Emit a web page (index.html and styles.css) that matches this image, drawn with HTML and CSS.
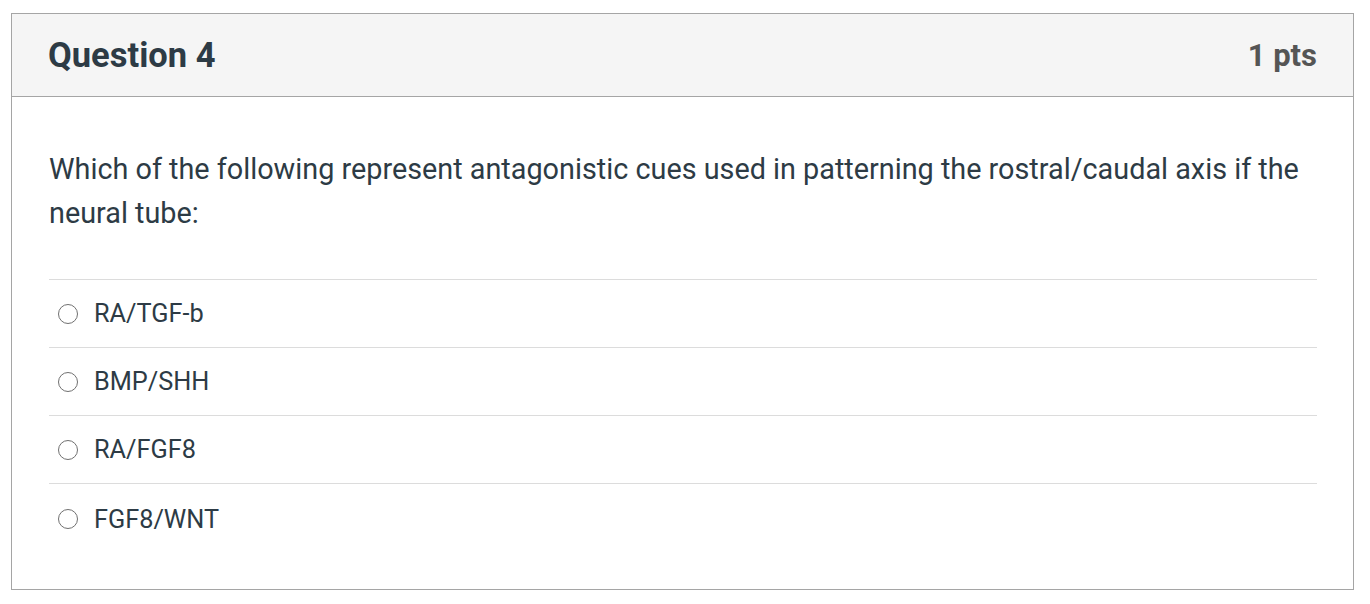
FILE: index.html
```html
<!DOCTYPE html>
<html>
<head>
<meta charset="utf-8">
<link rel="stylesheet" href="styles.css">
</head>
<body>
<div class="card">
  <div class="card-header">
    <h2 class="q-title">Question 4</h2>
    <span class="q-points">1 pts</span>
  </div>
  <div class="card-body">
    <p class="q-text">Which of the following represent antagonistic cues used in patterning the rostral/caudal axis if the neural tube:</p>
    <ul class="answers">
      <li class="answer"><span class="radio"></span><span class="label">RA/TGF-b</span></li>
      <li class="answer"><span class="radio"></span><span class="label">BMP/SHH</span></li>
      <li class="answer"><span class="radio"></span><span class="label">RA/FGF8</span></li>
      <li class="answer"><span class="radio"></span><span class="label">FGF8/WNT</span></li>
    </ul>
  </div>
</div>
</body>
</html>
```
FILE: styles.css
```css
html, body {
  margin: 0;
  padding: 0;
  background: #ffffff;
}
body {
  padding: 13px 0 0 11px;
  font-family: Roboto, "Liberation Sans", sans-serif;
  color: #2d3b45;
}
.card {
  width: 1343px;
  height: 577px;
  box-sizing: border-box;
  border: 1px solid #a5a5a5;
  background: #fff;
}
.card-header {
  height: 83px;
  box-sizing: border-box;
  background: #f5f5f5;
  border-bottom: 1px solid #a5a5a5;
  display: flex;
  align-items: center;
  justify-content: space-between;
  padding: 0 36px 0 36px;
}
.q-title {
  margin: 0;
  font-size: 34.5px;
  font-weight: 700;
  color: #2d3b45;
}
.q-points {
  font-size: 31px;
  font-weight: 700;
  color: #555555;
}
.card-body {
  padding: 50px 36px 0 37px;
}
.q-text {
  margin: 0 0 44px 0;
  font-size: 28.8px;
  line-height: 44px;
  color: #2d3b45;
}
.answers {
  list-style: none;
  margin: 0;
  padding: 0;
}
.answer {
  height: 68px;
  box-sizing: border-box;
  border-top: 1px solid #dcdcdc;
  display: flex;
  align-items: center;
  padding-left: 9px;
}
.answer:last-child {
  height: 69px;
  padding-top: 2px;
}
.radio {
  width: 20px;
  height: 20px;
  box-sizing: border-box;
  border: 1.6px solid #707070;
  border-radius: 50%;
  margin-right: 16px;
  flex: none;
}
.label {
  font-size: 25.3px;
  color: #2d3b45;
}
```
